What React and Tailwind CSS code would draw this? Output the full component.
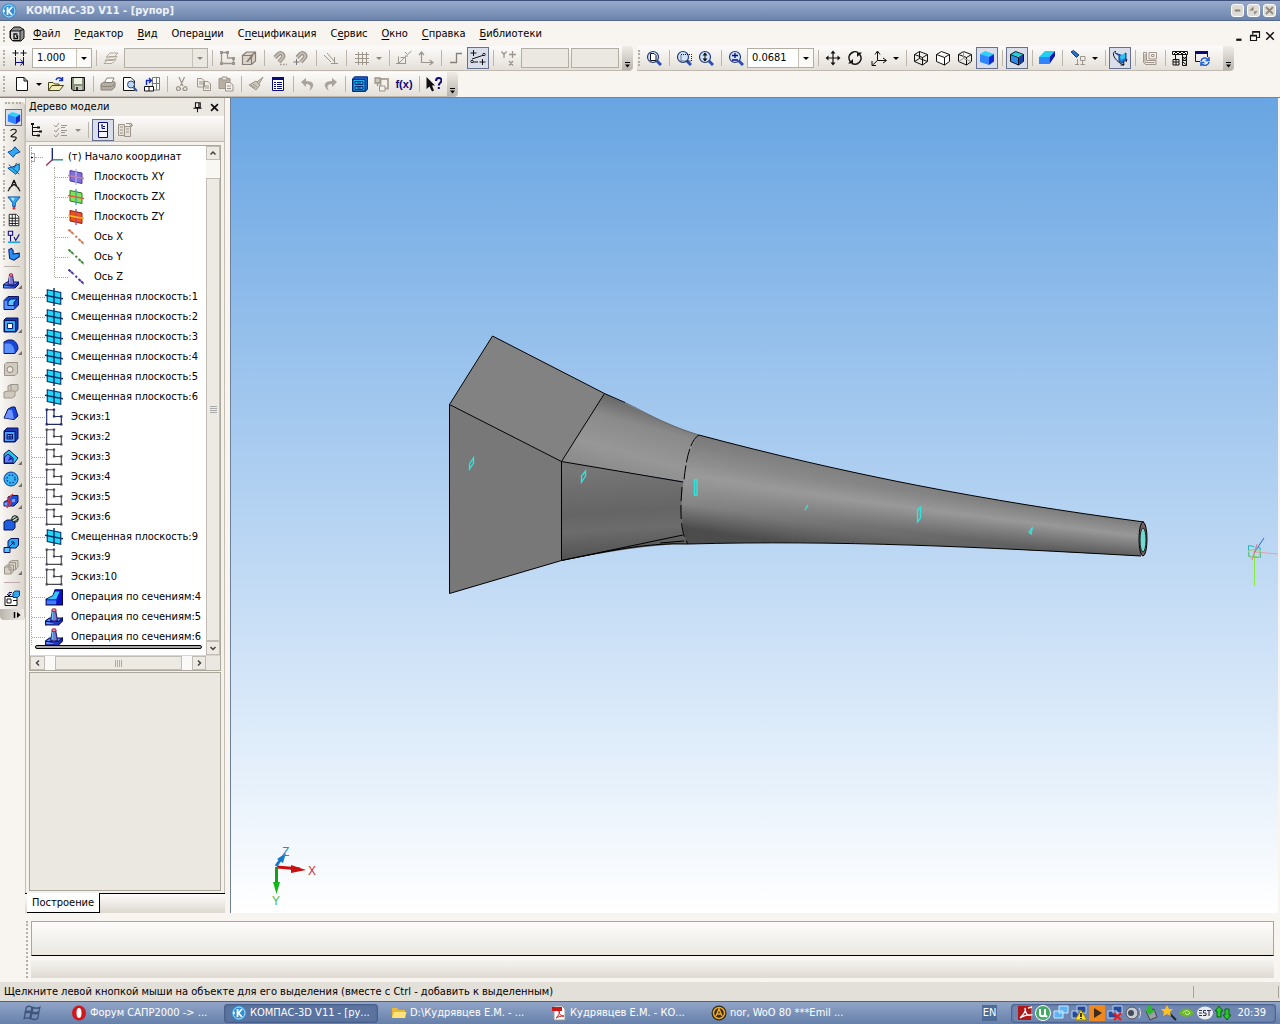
import React from "react";

const G = "#9c958b";
const N = "#0a0a78";
const K = "#111";

function Icon({ children, size = "size-4" }) {
  return (
    <svg viewBox="0 0 16 16" className={`${size} block shrink-0`} fill="none" strokeWidth="1" aria-hidden="true">
      {children}
    </svg>
  );
}

const cubeEdges = "M1.5 4.5L6.5 1.5L14.5 4.5V11.5L9.5 15L1.5 11.5ZM1.5 4.5L9.5 7.5L14.5 4.5M9.5 7.5V15";

function Lens({ children }) {
  return (
    <>
      <path d="M10.5 10.5L15 15" stroke="#2850b8" strokeWidth="3" />
      <circle cx="7" cy="7" r="5.5" fill="#cfe4fb" stroke="#24387a" strokeWidth="1.2" />
      {children}
    </>
  );
}

const magnet = (
  <>
    <path d="M4 7.500L7.500 4C10 1.500 14 5 11.500 8L8 12" stroke="#8f887e" strokeWidth="4" />
    <path d="M4 7.500L7.500 4C10 1.500 14 5 11.500 8L8 12" stroke="#c4bdb3" strokeWidth="2" />
  </>
);

const cone = (
  <>
    <path d="M0.500 11.500L4 9H15.500L12 12.500V15H0.500Z" fill="#5a94ff" stroke="#101068" />
    <path d="M0.500 12H12L15.500 9V11.500L12 15" fill="#2038c0" stroke="#101068" />
    <path d="M5 11L6.500 2.500H9.500L11 11C9 12 7 12 5 11Z" fill="#7f7ad0" stroke="#202070" />
    <path d="M6.500 3V10" stroke="#60c8f8" />
    <ellipse cx="8" cy="2" rx="1.800" ry="1.300" fill="#e8a0a8" stroke="#a02040" />
  </>
);

function plane(fill, edge, cross, post) {
  return (
    <>
      <path d="M2 1.500L14 4V14.500L2 12Z" fill={fill} stroke={edge} />
      <path d="M8 0V16" stroke={post} strokeWidth="1.300" />
      <path d="M0 6.500L16 9.500" stroke={cross} strokeWidth="1.300" />
    </>
  );
}

function axis(color) {
  return <path d="M0.500 0.500L6 5.500M7.500 7L9 8.500M10.500 10L16 15" stroke={color} strokeWidth="2" strokeDasharray="3 0.500" />;
}

function contour(color) {
  return (
    <>
      <path d="M1.500 1.500H8V7.500H14.500V14.500H1.500Z" stroke={color} />
      <path d="M0.500 0.500h2v2h-2zM7 0.500h2v2h-2zM7 6.500h2v2h-2zM13.500 6.500h2v2h-2zM0.500 13.500h2v2h-2zM13.500 13.500h2v2h-2z" fill={color} />
    </>
  );
}

const icons = {
  step: (
    <>
      <path d="M4.500 0V6M1.500 3H7.500M12.500 0V6M9.500 3H15.500" stroke={K} />
      <path d="M4.500 7V15.500M12.500 7V15.500M5 12.500H12M9.500 9.500L12 12.500L9.500 15.500" stroke={N} />
    </>
  ),
  layers: <path d="M1 13.500L5 9.500H13L9 13.500ZM2 10.500L6 6.500H14L10 10.500ZM3 7L7 3H15L11 7Z" stroke="#b0a99d" fill="#f2efe9" />,
  sketch: (
    <>
      <path d="M2.500 2.500H8.500V8H14.500V13.500H2.500Z" stroke={G} strokeWidth="1.300" />
      <path d="M1 1h3v3h-3zM7 1h3v3h-3zM1 12h3v3h-3zM13 7h3v3h-3zM13 12h3v3h-3z" fill={G} />
    </>
  ),
  box: (
    <>
      <path d="M1.500 5.500L5.500 2H14.500V11L10.500 14.500H1.500ZM1.500 5.500H10.500V14.500M10.500 5.500L14.500 2" stroke="#857d74" fill="#ddd5cc" strokeWidth="1.200" />
      <path d="M5 12L11 4L12.500 5.500L7 12Z" fill="#857d74" />
    </>
  ),
  magnetDots: (
    <>
      {magnet}
      <path d="M9 14.500h1.500M12 14.500h1.500M15 14.500h1" stroke={G} strokeWidth="1.500" />
    </>
  ),
  magnetPoint: (
    <>
      {magnet}
      <path d="M3.500 9V15M0.500 12H6.500" stroke="#777" />
    </>
  ),
  ortho: <path d="M1 5L8 12M4 3L12 12M8 13.500H15M11.500 7V13" stroke={G} />,
  grid: <path d="M1 4.500H15M1 8.500H15M1 12.500H15M4.500 2V15M8.500 2V15M12.500 2V15" stroke={G} />,
  lcs: <path d="M2.500 6.500V13.500H10M0 13.500H3M4.500 7.500H9.500V14M2 14L10 6M9 2L11.500 4.500L15.500 1M9 6H12" stroke={G} />,
  axes2: <path d="M3.500 3V12.500H14M1 5L3.500 2L6 5M11.500 10L15 12.500L11.500 15" stroke={G} strokeWidth="1.200" />,
  corner: <path d="M2 12.500H8.500V3.500H14" stroke="#888179" strokeWidth="1.300" />,
  snaps: (
    <>
      <path d="M3.500 0V6M0.500 3H6.500M12.500 9V15M9.500 12H15.500M2 9L14 5M3 12L8 12" stroke={K} />
      <circle cx="2" cy="11.500" r="1.200" fill="#fff" stroke={K} />
      <circle cx="14" cy="4.500" r="1.200" fill="#fff" stroke={K} />
    </>
  ),
  yx: <path d="M1.500 1.500L4 4.500L6.500 1.500M4 4.500V8M9 11L13 15.500M13 11L9 15.500M12.500 1V8M9 4.500H16" stroke={G} strokeWidth="1.300" />,
  zoomPage: <Lens><path d="M4.500 3.500H8L10 5.500V10.500H4.500Z" fill="#fff" stroke={K} /></Lens>,
  zoomArea: <Lens><path d="M5 4.500H15.500V11H5Z" stroke={K} strokeDasharray="1 1" /></Lens>,
  zoomUpDown: <Lens><path d="M7 3V11" stroke={K} /><path d="M4.500 5.500L7 2.500L9.500 5.500ZM4.500 8.500L7 11.500L9.500 8.500Z" fill={K} /></Lens>,
  zoomPlus: <Lens><path d="M7 3V8M4 5.500H10M4 10H10" stroke={N} strokeWidth="1.300" /></Lens>,
  move: (
    <>
      <path d="M8 2V14M2 8H14" stroke={K} strokeWidth="1.200" />
      <path d="M5.500 3.500L8 0.500L10.500 3.500ZM5.500 12.500L8 15.500L10.500 12.500ZM3.500 5.500L0.500 8L3.500 10.500ZM12.500 5.500L15.500 8L12.500 10.500Z" fill={K} />
    </>
  ),
  rotate: (
    <>
      <path d="M6.500 2C2 3.500 0.500 8 3.500 12M9.500 14C14 12.500 15.500 8 12.500 4M5 2.500C7 1.500 9.500 1.500 11 2.500M5 13.500C7 14.500 9 14.500 11 13.500" stroke={K} strokeWidth="1.400" />
      <path d="M1 13.500H6V9ZM15 2.500H10V7Z" fill={K} />
    </>
  ),
  axes3: (
    <>
      <path d="M6.500 2V10.500H15M6.500 10.500L1.500 15" stroke={K} />
      <path d="M4 4.500L6.500 1L9 4.500M12 8L15.500 10.500L12 13M1 11V15.500H5" stroke={K} />
    </>
  ),
  wire: <path d={cubeEdges + "M1.500 11.500L6.500 8.500L14.500 11.500M6.500 1.500V8.500"} stroke={K} />,
  wireHidden: <path d={cubeEdges} stroke={K} fill="#fff" />,
  wireThin: (
    <>
      <path d={cubeEdges} stroke={K} />
      <path d="M1.500 11.500L6.500 8.500L14.500 11.500M6.500 1.500V8.500" stroke="#999" />
    </>
  ),
  shaded: (
    <>
      <path d="M1 4L6 1L15 4L10 7.500Z" fill="#30d0f8" />
      <path d="M1 4L10 7V15L1 12Z" fill="#2f86ff" />
      <path d="M10 7L15 4V11.500L10 15Z" fill="#1428d8" />
    </>
  ),
  shadedEdges: (
    <>
      <path d={cubeEdges} fill="#2a8cf0" stroke={K} />
      <path d="M2.500 4.500L6.500 2.200L13.500 4.500L9.500 6.800Z" fill="#20d0d8" />
      <path d="M10 8L14 5.500V11L10 14Z" fill="#123fb0" />
    </>
  ),
  perspective: (
    <>
      <path d="M0 7L6 1H16L10.500 7Z" fill="#20d0f0" />
      <path d="M0 7H10.500V14H0Z" fill="#2f86ff" />
      <path d="M10.500 7L16 1V6L10.500 14Z" fill="#1018a8" />
    </>
  ),
  lamp: (
    <>
      <path d="M1 2L3.500 0.500L9 5L6.500 7.500Z" fill="#2870c8" stroke="#123f78" />
      <path d="M10.500 6.500H15V10.500H10.500ZM7.500 9V14M5 14.500H9M12.500 10.500V14.500M10.500 14.500H15" stroke={G} />
    </>
  ),
  spin: (
    <>
      <path d="M3 3L7 5.500V11L10 13L14 10V3L10 5.500Z" fill="#1b78d8" stroke="#0c3f90" />
      <path d="M8 6L13 3V8L9 10Z" fill="#33c5f2" />
      <path d="M4 1.500C-2 1.500 3 12 12 15M14 12L15 9M12 15H8.500M12 15L11.500 11.500" stroke={K} />
    </>
  ),
  snail: (
    <>
      <path d="M1.500 2.500H4.500V10.500H14V14.500H3.500L1.500 12.500ZM7 2.500H14.500V9H7ZM9.500 4.500H12V6.500H9.500ZM3 4V12.500H12.500" stroke="#a0968c" />
    </>
  ),
  crane: (
    <>
      <path d="M0.500 1.500H15.500V4.500H0.500ZM2 4L4 2L6 4L8 2L10 4L12 2L14 4M10.500 5V15.500H14.500V5M11 7L14 9.500M14 7L11 9.500M11 12L14 14.500M11 10.500H14M3.500 5V9" stroke={K} />
      <path d="M1 9.500H7V15H1ZM1 12H7M4 9.500V15" stroke={K} />
    </>
  ),
  refresh: (
    <>
      <path d="M1.500 2.500H13.500V7M1.500 2.500V11.500H6" stroke={N} />
      <path d="M1 1H14V4H1Z" fill={N} />
      <path d="M7 11A4 4 0 0 1 14 9.500M15 7V10.500H11.500M15 12A4 4 0 0 1 8 14M7 16V12.500H10.500" stroke="#2060d0" strokeWidth="1.600" />
    </>
  ),
  newDoc: <path d="M2.500 1.500H10L13.500 5V14.500H2.500ZM10 1.500V5H13.500" fill="#fff" stroke={K} />,
  open: (
    <>
      <path d="M0.500 14.500V6.500H5L6.500 8H11V9.500M0.500 14.500L4 9.500H15.500L11.500 14.500Z" fill="#f3eeb8" stroke="#444420" />
      <path d="M8 4C9 1 13 1 14 4M14.500 1V4.500H11" stroke="#1830c0" strokeWidth="1.400" />
    </>
  ),
  save: (
    <>
      <path d="M1.500 1.500H14.500V14.500H3L1.500 13Z" fill="#8a9078" stroke={K} />
      <path d="M4 2H12V8H4Z" fill="#eef0e4" />
      <path d="M5 10H12V14H5Z" fill="#c8ccc0" />
      <path d="M6 11H8V14H6Z" fill="#333" />
    </>
  ),
  print: (
    <>
      <path d="M1 8L4 6H15V11L12 14H1Z" fill="#b5aea4" stroke="#8a837a" />
      <path d="M4.500 6.500L7 2H14L12 6.500Z" fill="#fff" stroke="#8a837a" />
      <path d="M1 10.500H11.500L15 8" stroke="#8a837a" />
    </>
  ),
  preview: (
    <>
      <path d="M1.500 1.500H9L12.500 5V14.500H1.500Z" fill="#fff" stroke={K} />
      <circle cx="9" cy="8.500" r="3.500" fill="#bcd8f4" stroke="#26457e" />
      <path d="M11.500 11.500L15 15" stroke="#2a5ca8" strokeWidth="2" />
    </>
  ),
  convert: (
    <>
      <path d="M8.500 1.500H15.500V14H8.500ZM12.500 2V14M9 7.500H15" stroke="#777" fill="#fff" />
      <path d="M0.500 10.500H9.500V15H0.500ZM5 10.500V15" stroke={K} fill="#fff" />
      <path d="M2.500 9V4.500H7M5 2L7.500 4.500L5 7" stroke="#1028c0" strokeWidth="1.400" />
    </>
  ),
  cut: <path d="M5 1L9 10M10.500 1L6.500 10M4.500 10.500A2 2 0 1 0 6.500 12.500ZM11 10.500A2 2 0 1 1 9 12.500Z" stroke={G} strokeWidth="1.200" />,
  copy: <path d="M1.500 2.500H6L8.500 5V11H1.500ZM7.500 5.500H12L14.500 8V14.500H7.500ZM3 6H7M3 8H7M9 10H13M9 12H13" stroke={G} fill="#f1ede6" />,
  paste: (
    <>
      <path d="M1 2.500H12V12.500H1Z" fill="#b8b0a4" stroke={G} />
      <path d="M4 1H9V4H4Z" fill="#e8e4dc" stroke={G} />
      <path d="M7.500 6.500H12L15 9V15H7.500ZM9 10H13M9 12.500H13" fill="#f2eee8" stroke={G} />
    </>
  ),
  brush: <path d="M15 1L9 6L11 8ZM8 5L12 9L8 14L1 9ZM3 9L7 12M5 8L9 11" fill="#ccc5ba" stroke={G} />,
  props: (
    <>
      <path d="M2.500 1.500H13.500V14.500H2.500Z" fill="#fff" stroke={N} />
      <path d="M2 1H14V4H2Z" fill={N} />
      <path d="M4 6.500H6M7 6.500H12M4 8.500H6M7 8.500H12M4 10.500H6M7 10.500H12M4 12.500H6M7 12.500H12" stroke={N} />
    </>
  ),
  undo: <path d="M1 6L6 2V5C14 5 16 10 9 15C12 10 10 8 6 8V11Z" fill="#aaa39a" />,
  redo: <path d="M15 6L10 2V5C2 5 0 10 7 15C4 10 6 8 10 8V11Z" fill="#aaa39a" />,
  manager: (
    <>
      <path d="M0.500 3L2.500 0.800H15.500V13L13.500 15.500H0.500Z" fill="#1060c8" stroke="#082878" />
      <path d="M1 3.500H13V15H1Z" fill="#19b8f0" stroke="#082878" />
      <path d="M3 5.500H11V8.500H3ZM3 10.500H11V13.500H3ZM5 7H9M5 12H9" stroke="#082878" />
    </>
  ),
  variables: (
    <>
      <path d="M6.500 3H14V12.500H6.500Z" stroke="#b0a89c" fill="#f4f0ea" strokeWidth="2" />
      <path d="M5.500 10H11V15H5.500Z" stroke={G} fill="#f4f0ea" />
      <path d="M1 2H6V7H1ZM3.500 7V10" stroke={G} fill="#d0c9be" strokeWidth="1.300" />
    </>
  ),
  help: (
    <>
      <path d="M0.500 1V13L3.500 10.500L6 15.500L8 14.500L6 9.500H9Z" fill={K} />
      <path d="M10 5C10 1 15.500 1 15.500 4.500C15.500 7 12.800 6.500 12.800 9.500M12.800 11V13" stroke={N} strokeWidth="2" />
    </>
  ),
  curve: <path d="M4 3C8 0 12 2 10 5L5 9C4 10 5 10.500 8 10C12 10 11 13 7 15" stroke={K} strokeWidth="1.300" />,
  planeBlue: <path d="M1 8L6 6L9 2L15 8L10 10L7 14Z" fill="#2fa8f0" stroke="#0a3a90" />,
  planeCross: (
    <>
      <path d="M1 7L8 5L14 2V9L10 14Z" fill="#2fb8f4" stroke="#0a3a90" />
      <path d="M2 3L14 14M11 1L8 7" stroke="#0a3a90" />
    </>
  ),
  compass: <path d="M8 1L5 8L1 14M8 1L11 8L15 14M2 11L8 6L14 11M6 4H10" stroke={K} strokeWidth="1.300" />,
  filter: (
    <>
      <path d="M1 1H15L9.500 8V12H6.500V8Z" fill="#2fa8f0" stroke="#0a50a0" />
      <path d="M4 2H9L7 6Z" fill="#a8e4ff" />
      <circle cx="8" cy="14" r="1.600" fill="#e83030" />
    </>
  ),
  sheet: <path d="M2.500 1.500H10.500L13.500 4.500V14.500H2.500ZM2.500 6H13M2.500 9H13M2.500 12H13M6 1.500V14M9.500 1.500V14" fill="#fff" stroke={K} />,
  measure: (
    <>
      <path d="M1.500 1.500H6.500V6H1.500ZM4 6V13M8 8L10 12L14 5" stroke={N} strokeWidth="1.200" />
      <path d="M1 14H15" stroke="#26a8e0" strokeWidth="2" />
    </>
  ),
  elbow: <path d="M2 3L5 1.500L7 4V8L14 7V11L8 15L3 13Z" fill="#2a90f0" stroke="#0a1c80" strokeWidth="1.200" />,
  extrude: cone,
  cutBox: (
    <>
      <path d="M1 5.500L5 1.500H15.500V10L11 14.500H1Z" fill="#1848d0" stroke="#0a1260" />
      <path d="M1.500 6H4.500V10.500H11V14H1.500Z" fill="#5a94ff" />
      <path d="M5 6.500L8 4H14L11 7.500V10.500H5Z" fill="#60c4ff" stroke="#0a1260" />
    </>
  ),
  frame: (
    <>
      <path d="M1 3L3 1H15V12L13 15H1Z" fill="#1038b0" stroke="#0a1260" />
      <path d="M1.500 3.500H12.500V14.500H1.500Z" fill="#28b0f8" stroke="#0a1260" />
      <path d="M4.500 6.500H9.500V11.500H4.500Z" fill="#fff" stroke="#0a1260" />
    </>
  ),
  round: (
    <>
      <path d="M1 3L5 1H9C13 2 15 6 15 10L12 14.500H1Z" fill="#1848d8" stroke="#0a1260" />
      <path d="M1.500 4.500H6C9 5 11.500 8 11.500 14H1.500Z" fill="#5a90ff" />
    </>
  ),
  holeOff: (
    <>
      <path d="M1.500 3.500L4 1.500H14.500V12L12 14.500H1.500Z" fill="#d0cabf" stroke={G} />
      <circle cx="7" cy="8.500" r="3" fill="#eee9e0" stroke="#8a837a" />
    </>
  ),
  ribOff: <path d="M1 13V9L5 8V3L8 1.500H15V7L12 9V13L9 15H1ZM5 8H12M8 1.500V7" fill="#cfc8bd" stroke={G} />,
  taper: (
    <>
      <path d="M1 13L5 4L9 2H12L15 11L11 14.500Z" fill="#1848d8" stroke="#0a1260" />
      <path d="M1.500 13L5.500 4.500L9 5L11 14Z" fill="#6c94ff" />
    </>
  ),
  shell: (
    <>
      <path d="M1 4L4 1H15V11.500L12 15H1Z" fill="#1838b8" stroke="#0a1260" />
      <path d="M1.500 4.500H12V14.500H1.500Z" fill="#48a0ff" stroke="#0a1260" />
      <path d="M4 7.500H9.500V12H4ZM4 10H9.500M7 7.500V12" stroke="#0a1260" />
    </>
  ),
  wedge: (
    <>
      <path d="M1 5L6 1L15 9L11 14.500H1Z" fill="#28c8e8" stroke="#0a1260" />
      <path d="M1.500 8L5 5L10 9V14H1.500Z" fill="#5a80ff" stroke="#0a1260" />
      <path d="M5 12L7 7L10 10Z" fill="#1a2cb0" />
    </>
  ),
  array: (
    <>
      <circle cx="8" cy="8" r="7" fill="#35b5f4" stroke="#0a3a90" />
      <circle cx="8" cy="8" r="4" stroke="#0a3a90" strokeWidth="1.500" strokeDasharray="1.500 1.700" />
    </>
  ),
  section: (
    <>
      <path d="M1 9L5 7V4L9 2.500H15V9L11 13H1Z" fill="#1c50d8" stroke="#0a1260" />
      <path d="M1.500 9.500H5V12.500H1.500ZM9 6H12V9H9Z" fill="#7aa4ff" />
      <path d="M4 15L6 5L10 1M6 14L9 6" stroke="#e03030" strokeWidth="1.400" />
    </>
  ),
  boolean: (
    <>
      <path d="M1 7L4 5H12V13L10 15H1Z" fill="#1c60e0" stroke="#0a1260" />
      <circle cx="12" cy="4" r="3.300" fill="#b8d8c8" stroke={K} />
      <path d="M9 5L14 2M11 7L15 4" stroke={K} />
    </>
  ),
  scale: (
    <>
      <path d="M5 4L8 1.500H15.500V8L13 11H5Z" fill="#25a8f0" stroke="#0a1260" />
      <path d="M1 10.500H7V15.500H1Z" fill="#5ac0ff" stroke="#0a1260" />
      <path d="M6 10L11 5M8 5H11V8" stroke="#0a1260" />
    </>
  ),
  cubesOff: <path d="M1.500 8L4 6H10.500V12L8 15H1.500ZM6 3.500L8.500 1.500H15V8L12.500 11H6ZM6 3.500H12.500V11M1.500 8H8V15" fill="#d6cfc4" stroke={G} />,
  group: (
    <>
      <path d="M1 6.500H13V15.500H1ZM3 9H7V13H3ZM9 10.500H13" fill="#fff" stroke={K} />
      <path d="M9 3L11 1H15.500V5.500L13.500 7.500H9Z" fill="#2fa8f0" stroke="#0a3a90" />
      <path d="M5 5V2.500H8M3 4L5 6L7 4" stroke={N} />
    </>
  ),
  tree: (
    <>
      <path d="M3.500 1V13.500H8M3.500 5.500H8M3.500 9.500H10" stroke={K} />
      <path d="M2 1h3v2h-3zM8 4.500h3v2h-3zM10 8.500h3v2h-3zM8 12.500h3v2h-3z" fill={K} />
    </>
  ),
  listOff: <path d="M1 3L3 5L6 1M1 8L3 10L6 6M1 13L3 15L6 11M8 3.500H14M8 5.500H12M8 8.500H14M8 10.500H12M8 13.500H14" stroke={G} />,
  panel: <path d="M3.500 0.500H12.500V15.500H3.500ZM3.500 9.500H12.500M6 3H8M7 3V6.500H10M8 4.500H10" stroke={N} fill="#f4f5ff" />,
  pagesOff: <path d="M1.500 2.500H7.500V13.500H1.500ZM7.500 4.500H13.500V14.500H7.500ZM3 5H6M3 8H6M3 11H6M9 7H12M9 10H12M9 1.500H14.500V4M12.500 2.500L14.500 4.500L16 2.500" stroke={G} fill="#e6e1d8" />,
  origin: (
    <>
      <path d="M6.500 0V11" stroke="#1a2478" strokeWidth="1.200" />
      <path d="M6.500 10.500H16" stroke="#1f8a78" strokeWidth="1.200" />
      <path d="M6.500 10.500L1 15.500" stroke="#a02860" strokeWidth="1.200" />
    </>
  ),
  planeXY: plane("#8070d8", "#5038a0", "#c080b0", "#b0b8f0"),
  planeZX: plane("#80e060", "#2c7a20", "#e06030", "#40a0b0"),
  planeZY: plane("#f05020", "#902010", "#f8c020", "#a05080"),
  axisX: axis("#c87850"),
  axisY: axis("#3f8a35"),
  axisZ: axis("#4a3098"),
  offset: plane("#20d8f8", "#083068", "#083068", "#083068"),
  contourFirst: contour("#202a68"),
  contour: contour("#4a4a50"),
  loft: (
    <>
      <path d="M1 10L7 7L9 1.500H15.500V15H1Z" fill="#1010c8" stroke="#080850" />
      <path d="M1.500 10H10L13 3H9L7 7Z" fill="#30c8f8" />
      <path d="M1.500 11H10V14.500H1.500Z" fill="#3a80ff" />
    </>
  ),
};

function Tool({ icon, label, on, children }) {
  return (
    <button
      type="button"
      aria-label={label || icon}
      className={`flex h-[22px] w-[22px] shrink-0 items-center justify-center ${on ? "border border-[#66718e] bg-[#d9deea]" : ""}`}
    >
      {children || <Icon>{icons[icon]}</Icon>}
    </button>
  );
}

function Sep() {
  return (
    <span className="flex w-2 shrink-0 justify-center">
      <span className="h-4 w-px bg-[#bbb5aa]" />
    </span>
  );
}

function Down({ dim }) {
  return (
    <svg viewBox="0 0 12 12" className="size-3 shrink-0" aria-hidden="true">
      <path d="M3 5H9L6 8Z" fill={dim ? "#8f887e" : "#000"} />
    </svg>
  );
}

function Grip() {
  return <span className="h-4 w-[3px] shrink-0 border-l-2 border-dotted border-[#b4afa5]" />;
}

function Combo({ label, value, width, disabled }) {
  return (
    <span className={`flex h-5 shrink-0 items-center border border-[#b3aea4] ${width} ${disabled ? "bg-[#ebe8e1]" : "bg-white"}`}>
      <select aria-label={label} disabled={disabled} className="h-full min-w-0 flex-1 appearance-none bg-transparent pl-1 text-black outline-none">
        <option>{value}</option>
      </select>
      <span className={`flex h-full w-[15px] items-center justify-center border-l border-[#c6c1b7] ${disabled ? "bg-[#ebe8e1]" : "bg-[#fbfaf7]"}`}>
        <Down dim={disabled} />
      </span>
    </span>
  );
}

function Overflow() {
  return (
    <button type="button" aria-label="Параметры панели" className="flex h-full w-[11px] shrink-0 items-end justify-center rounded-r bg-linear-to-b from-[#efece6] to-[#b9b5ad] pb-[2px]">
      <svg viewBox="0 0 7 7" className="size-[7px]">
        <path d="M1 1.500H6" stroke="#000" />
        <path d="M1 3.500H6L3.500 6.500Z" fill="#000" />
      </svg>
    </button>
  );
}

const bar = "flex items-center border-b border-[#c0b9b0] bg-linear-to-b from-[#fdfcfb] to-[#e4dfd8] rounded-r";

const menu = [
  ["", "Ф", "айл"],
  ["", "Р", "едактор"],
  ["", "В", "ид"],
  ["Опера", "ц", "ии"],
  ["С", "п", "ецификация"],
  ["С", "е", "рвис"],
  ["", "О", "кно"],
  ["", "С", "правка"],
  ["", "Б", "иблиотеки"],
];

function Logo() {
  return (
    <Icon>
      <circle cx="8" cy="8" r="7.500" fill="#2f8fd4" />
      <circle cx="8" cy="8" r="6" stroke="#b8e0f8" />
      <path d="M6.500 4V12M11 4L7.500 8L11 12" stroke="#fff" strokeWidth="1.800" />
      <path d="M2 8H4M3 6.500V9.500" stroke="#fff" />
    </Icon>
  );
}

function TitleBar() {
  const btn = "flex size-[13px] items-center justify-center rounded-[3px] border border-white bg-[#dedbd5]";
  return (
    <header className="flex h-[21px] items-center border-t border-b border-t-[#3d4f79] border-b-[#56698f] bg-linear-to-b from-[#98aacb] to-[#6c84ac] px-px">
      <Logo />
      <h1 className="flex-1 pl-[9px] font-bold text-[#edf2f9]">КОМПАС-3D V11 - [рупор]</h1>
      <div className="flex gap-[3px] pr-[3px]">
        <button type="button" aria-label="Свернуть" className={btn}>
          <Icon size="size-[11px]"><path d="M4 8H12" stroke="#8a8378" strokeWidth="3" /></Icon>
        </button>
        <button type="button" aria-label="Развернуть" className={btn}>
          <Icon size="size-[11px]"><path d="M8 2V8H2ZM9 14V9H14Z" fill="#8a8378" /></Icon>
        </button>
        <button type="button" aria-label="Закрыть" className={btn}>
          <Icon size="size-[11px]"><path d="M3 3L13 13M13 3L3 13" stroke="#8a8378" strokeWidth="2.500" /></Icon>
        </button>
      </div>
    </header>
  );
}

function MenuBar() {
  return (
    <nav className="flex h-[25px] items-center pl-[3px]">
      <Grip />
      <span className="pl-[3px]">
        <Icon>
          <path d="M1 5L5 1H11L15 4V12L12 15H4L1 12Z" fill="#8f8f8f" stroke={K} />
          <path d="M1.500 5H11V14.500H3L1.500 12ZM11 5L15 3" fill="#d6d6d6" stroke={K} />
          <path d="M8.500 8H5V12.500H8.500V10H7" stroke={K} strokeWidth="1.300" />
        </Icon>
      </span>
      <div className="flex flex-1 pl-px">
        {menu.map(([before, key, after]) => (
          <button type="button" key={before + key + after} className="px-[7px]">
            {before}
            <u className="underline-offset-2">{key}</u>
            {after}
          </button>
        ))}
      </div>
      <div className="flex gap-[3px] pt-1 pr-1">
        <button type="button" aria-label="Свернуть документ"><Icon size="size-3"><path d="M3 13H10" stroke={K} strokeWidth="3" /></Icon></button>
        <button type="button" aria-label="Восстановить документ"><Icon size="size-3"><path d="M2 7H10V14H2ZM5 6V2H14V10H11M5 3H14M2 8H10" stroke={K} strokeWidth="1.500" /></Icon></button>
        <button type="button" aria-label="Закрыть документ"><Icon size="size-3"><path d="M3 3L13 13M13 3L3 13" stroke={K} strokeWidth="2" /></Icon></button>
      </div>
    </nav>
  );
}

function Toolbars() {
  return (
    <>
      <div className="flex h-[25px] gap-1">
        <div className={`${bar} pl-[3px]`}>
          <Grip />
          <span className="w-0.5" />
          <Tool icon="step" label="Текущий шаг" />
          <span className="w-0.5" />
          <Combo label="Шаг курсора" value="1.000" width="w-[60px]" />
          <Sep />
          <Tool icon="layers" label="Слои" />
          <span className="w-0.5" />
          <Combo label="Слой" value="" width="w-[84px]" disabled />
          <Sep />
          <Tool icon="sketch" label="Эскиз" />
          <Tool icon="box" label="Операция" />
          <Sep />
          <Tool icon="magnetDots" label="Привязки" />
          <Tool icon="magnetPoint" label="Запретить привязки" />
          <Sep />
          <Tool icon="ortho" label="Ортогональное черчение" />
          <Sep />
          <span className="w-px" />
          <Tool icon="grid" label="Сетка" />
          <Down dim />
          <Sep />
          <Tool icon="lcs" label="Локальная СК" />
          <Tool icon="axes2" label="Система координат" />
          <Sep />
          <Tool icon="corner" label="Округление" />
          <Tool icon="snaps" label="Параметрический режим" on />
          <Sep />
          <Tool icon="yx" label="Координаты" />
          <input aria-label="Координата X" disabled className="ml-[2px] h-5 w-12 border border-[#b3aea4] bg-[#ebe8e1]" />
          <input aria-label="Координата Y" disabled className="mr-[3px] ml-0.5 h-5 w-12 border border-[#b3aea4] bg-[#ebe8e1]" />
          <Overflow />
        </div>
        <div className={`${bar} pl-px`}>
          <Grip />
          <span className="w-0.5" />
          <Tool icon="zoomPage" label="Показать все" />
          <Sep />
          <Tool icon="zoomArea" label="Увеличить рамкой" />
          <Tool icon="zoomUpDown" label="Приблизить" />
          <Sep />
          <Tool icon="zoomPlus" label="Масштаб" />
          <Combo label="Текущий масштаб" value="0.0681" width="w-[67px]" />
          <Sep />
          <Tool icon="move" label="Сдвинуть" />
          <Tool icon="rotate" label="Повернуть" />
          <span className="w-0.5" />
          <Tool icon="axes3" label="Ориентация" />
          <Down />
          <Sep />
          <Tool icon="wire" label="Каркас" />
          <Tool icon="wireHidden" label="Без невидимых линий" />
          <Tool icon="wireThin" label="Невидимые линии тонкие" />
          <Tool icon="shaded" label="Полутоновое" on />
          <Sep />
          <Tool icon="shadedEdges" label="Полутоновое с каркасом" on />
          <Sep />
          <Tool icon="perspective" label="Перспектива" />
          <Sep />
          <span className="w-px" />
          <Tool icon="lamp" label="Освещение" />
          <Down />
          <Sep />
          <Tool icon="spin" label="Упрощенное отображение" on />
          <Sep />
          <Tool icon="snail" label="Отображение" />
          <Sep />
          <Tool icon="crane" label="Построение" />
          <Tool icon="refresh" label="Обновить" />
          <span className="w-[10px]" />
          <Overflow />
        </div>
      </div>
      <div className="flex h-[27px] border-b border-[#6d86a8] pt-px">
        <div className={`${bar} pl-[3px]`}>
          <Grip />
          <span className="w-[5px]" />
          <Tool icon="newDoc" label="Создать" />
          <Down />
          <Tool icon="open" label="Открыть" />
          <Tool icon="save" label="Сохранить" />
          <Sep />
          <Tool icon="print" label="Печать" />
          <Tool icon="preview" label="Просмотр" />
          <Tool icon="convert" label="Преобразовать" />
          <Sep />
          <Tool icon="cut" label="Вырезать" />
          <Tool icon="copy" label="Копировать" />
          <Tool icon="paste" label="Вставить" />
          <Sep />
          <Tool icon="brush" label="Копировать свойства" />
          <Tool icon="props" label="Свойства" />
          <Sep />
          <Tool icon="undo" label="Отменить" />
          <Tool icon="redo" label="Повторить" />
          <Sep />
          <Tool icon="manager" label="Менеджер библиотек" />
          <Tool icon="variables" label="Переменные" />
          <Tool label="Функции">
            <span className="font-['Liberation_Sans',sans-serif] font-bold text-[#0a0a78]">f(x)</span>
          </Tool>
          <Sep />
          <Tool icon="help" label="Справка" />
          <span className="w-0.5" />
          <Overflow />
        </div>
      </div>
    </>
  );
}

const sideModes = ["curve", "planeBlue", "planeCross", "compass", "filter", "sheet", "measure", "elbow"];
const sideTools = ["extrude", "cutBox", "frame", "round", "holeOff", "ribOff", "taper", "shell", "wedge", "array", "section", "boolean", "scale", "cubesOff"];
const withMenu = ["extrude", "frame", "round", "wedge", "array", "section", "cubesOff"];

function SideBar() {
  return (
    <aside className="w-[25px] shrink-0 pt-1">
      <div className="rounded-r border-r border-[#cdc7bd] bg-linear-to-r from-[#faf8f5] to-[#dcd7ce]">
        <div className="ml-[5px] h-[7px] w-4 border-t-2 border-dotted border-[#b4afa5]" />
        <button type="button" aria-label="Редактирование детали" className="ml-[5px] flex size-[17px] items-center justify-center border border-[#66718e] bg-[#d9deea]">
          <Icon size="size-[14px]">{icons.shaded}</Icon>
        </button>
        {sideModes.map((name) => (
          <div key={name} className="flex h-[17px] items-center gap-px pl-[3px]">
            <span className="h-3 w-[3px] border-l-2 border-dotted border-[#b4afa5]" />
            <button type="button" aria-label={name}><Icon size="size-[14px]">{icons[name]}</Icon></button>
          </div>
        ))}
        <div className="mx-1 mt-1 mb-[3px] h-px bg-[#b9b2a8]" />
        {sideTools.map((name) => (
          <button type="button" key={name} aria-label={name} className="flex h-[22px] w-full items-center pl-[3px]">
            <Icon>{icons[name]}</Icon>
            {withMenu.includes(name) && (
              <svg viewBox="0 0 4 4" className="mt-3 -ml-px size-1"><path d="M4 0V4H0Z" fill="#77716a" /></svg>
            )}
          </button>
        ))}
        <div className="mx-1 my-1 h-px bg-[#c0a8b0]" />
        <button type="button" aria-label="Группа" className="flex h-[22px] w-full items-center pl-1">
          <Icon>{icons.group}</Icon>
        </button>
        <button type="button" aria-label="Ещё" className="flex h-[11px] w-full items-center justify-end rounded-b bg-linear-to-r from-[#b9b5ad] to-[#f0ede7] pr-[3px]">
          <svg viewBox="0 0 8 8" className="size-2"><path d="M1.500 1V7" stroke="#000" strokeWidth="1.500" /><path d="M4 1V7L7.500 4Z" fill="#000" /></svg>
        </button>
      </div>
    </aside>
  );
}

const originChildren = [
  ["planeXY", "Плоскость XY"],
  ["planeZX", "Плоскость ZX"],
  ["planeZY", "Плоскость ZY"],
  ["axisX", "Ось X"],
  ["axisY", "Ось Y"],
  ["axisZ", "Ось Z"],
];

const items = [
  ["offset", "Смещенная плоскость:1"],
  ["offset", "Смещенная плоскость:2"],
  ["offset", "Смещенная плоскость:3"],
  ["offset", "Смещенная плоскость:4"],
  ["offset", "Смещенная плоскость:5"],
  ["offset", "Смещенная плоскость:6"],
  ["contourFirst", "Эскиз:1"],
  ["contour", "Эскиз:2"],
  ["contour", "Эскиз:3"],
  ["contour", "Эскиз:4"],
  ["contour", "Эскиз:5"],
  ["contour", "Эскиз:6"],
  ["offset", "Смещенная плоскость:9"],
  ["contour", "Эскиз:9"],
  ["contour", "Эскиз:10"],
  ["loft", "Операция по сечениям:4"],
  ["extrude", "Операция по сечениям:5"],
  ["extrude", "Операция по сечениям:6"],
];

const dots = "shrink-0 border-t border-dotted border-[#a9a49b]";
const thumb = "flex items-center justify-center border border-[#c2bdb4] bg-[#edeae4]";

function Chevron({ d }) {
  return (
    <svg viewBox="0 0 8 8" className="size-2" fill="none" aria-hidden="true">
      <path d={d} stroke="#444" strokeWidth="1.500" />
    </svg>
  );
}

function ModelTree() {
  return (
    <div className="flex h-[526px] shrink-0 flex-col border border-[#aca79d] bg-white">
      <div className="flex min-h-0 flex-1">
        <div className="min-w-0 flex-1">
          <ul className="ml-px h-[499px] overflow-hidden pt-px whitespace-nowrap">
            <li className="border-l border-dotted border-[#a9a49b]">
              <div className="flex h-5 items-center">
                <span className="-ml-px flex h-[9px] w-1 items-center border border-l-0 border-[#aaa]"><span className="h-px w-0.5 bg-black" /></span>
                <span className={`${dots} w-2`} />
                <span className="ml-[2px]"><Icon size="size-[18px]">{icons.origin}</Icon></span>
                <span className="ml-[5px]">(т) Начало координат</span>
              </div>
              <ul className="ml-[22px]">
                {originChildren.map(([icon, name], i) => (
                  <li key={name} className="flex h-5 items-center">
                    <span className={`self-start border-l border-dotted border-[#a9a49b] ${i === originChildren.length - 1 ? "h-[10px]" : "h-5"}`} />
                    <span className={`${dots} w-[13px]`} />
                    <Icon>{icons[icon]}</Icon>
                    <span className="ml-[10px]">{name}</span>
                  </li>
                ))}
              </ul>
            </li>
            {items.map(([icon, name]) => (
              <li key={name} className="flex h-5 items-center border-l border-dotted border-[#a9a49b]">
                <span className={`${dots} w-[13px]`} />
                <Icon size="size-[18px]">{icons[icon]}</Icon>
                <span className="ml-2">{name}</span>
              </li>
            ))}
          </ul>
          <div className="mr-1 ml-[5px] h-1 rounded-full border border-black bg-[#aaa]" />
        </div>
        <div className="flex w-[14px] shrink-0 flex-col bg-[#f8f7f4]">
          <div className={`${thumb} h-[14px]`}><Chevron d="M1.500 5.500L4 3L6.500 5.500" /></div>
          <div className="h-[18px]" />
          <div className={`${thumb} flex-1`}>
            <span className="flex w-[7px] flex-col gap-px"><i className="h-px bg-[#aaa]" /><i className="h-px bg-[#aaa]" /><i className="h-px bg-[#aaa]" /><i className="h-px bg-[#aaa]" /></span>
          </div>
          <div className={`${thumb} h-[14px]`}><Chevron d="M1.500 3L4 5.500L6.500 3" /></div>
        </div>
      </div>
      <div className="flex h-[15px] border-t border-[#d8d4cc] bg-[#ebe8e1] pr-[14px]">
        <div className={`${thumb} w-[15px]`}><Chevron d="M5 1.500L2.500 4L5 6.500" /></div>
        <div className="w-[10px] bg-[#faf9f7]" />
        <div className={`${thumb} flex-1`}>
          <span className="flex h-[7px] gap-px"><i className="w-px bg-[#aaa]" /><i className="w-px bg-[#aaa]" /><i className="w-px bg-[#aaa]" /><i className="w-px bg-[#aaa]" /></span>
        </div>
        <div className="w-[10px] bg-[#faf9f7]" />
        <div className={`${thumb} w-[14px]`}><Chevron d="M3 1.500L5.500 4L3 6.500" /></div>
      </div>
    </div>
  );
}

function TreePanel() {
  return (
    <section className="flex w-[200px] shrink-0 flex-col">
      <div className="flex min-h-0 flex-1 flex-col border-r border-l border-[#c4beb4] bg-[#f5f2ec]">
        <div className="flex h-[18px] items-center bg-[#ebe8e1] pl-[3px]">
          <h2 className="flex-1">Дерево модели</h2>
          <button type="button" aria-label="Закрепить" className="mr-[6px]"><Icon size="size-[11px]"><path d="M5 1H12V8H5ZM2 9H14M8 9V15M10 1V8" stroke={K} strokeWidth="1.500" /></Icon></button>
          <button type="button" aria-label="Закрыть панель" className="mr-1"><Icon size="size-[11px]"><path d="M3 3L13 13M13 3L3 13" stroke={K} strokeWidth="2.500" /></Icon></button>
        </div>
        <div className="flex h-[26px] items-center border-b border-[#c0b9b0] bg-linear-to-b from-[#fdfcfb] to-[#e4dfd8] pt-0.5">
          <Tool icon="tree" label="Структура" />
          <span className="w-0.5" />
          <Tool icon="listOff" label="Состав" />
          <Down dim />
          <Sep />
          <Tool icon="panel" label="Дополнительное окно" on />
          <Tool icon="pagesOff" label="Отношения" />
        </div>
        <div className="flex min-h-0 flex-1 flex-col px-[3px] pt-[3px]">
          <ModelTree />
          <div className="mt-px mb-[2px] flex-1 border border-[#aca79d] bg-[#ebe8e1]" />
        </div>
      </div>
      <div className="flex h-5 border-t border-black bg-linear-to-b from-[#fdfcfb] to-[#ddd8d0] pl-[2px]">
        <button type="button" className="-mt-px border-r border-b border-black bg-white px-[5px]">Построение</button>
      </div>
    </section>
  );
}

const pipeShape = "M699 435C845 474 985 501 1144 522L1141 556C980 547 840 540 688 544C676 525 682 455 699 435Z";

function Viewport() {
  return (
    <main className="ml-[5px] min-w-0 flex-1 border-l border-[#6f7f96] bg-linear-to-b from-[#68a5e2] to-white">
      <svg viewBox="231 98 1047 815" className="h-full w-full" fill="none" role="img" aria-label="рупор">
        <defs>
          <linearGradient id="pipe" gradientUnits="userSpaceOnUse" x1="800" y1="447" x2="786" y2="543">
            <stop offset="0" stopColor="#767676" />
            <stop offset="0.450" stopColor="#9b9b9b" />
            <stop offset="0.750" stopColor="#858585" />
            <stop offset="1" stopColor="#4c4c4c" />
          </linearGradient>
          <linearGradient id="pipeEnd" gradientUnits="userSpaceOnUse" x1="1090" y1="514" x2="1085" y2="554">
            <stop offset="0" stopColor="#7a7a7a" />
            <stop offset="0.400" stopColor="#989898" />
            <stop offset="1" stopColor="#505050" />
          </linearGradient>
          <linearGradient id="pipeMix" x1="0" x2="1">
            <stop offset="0" stopColor="#fff" stopOpacity="0" />
            <stop offset="1" stopColor="#fff" />
          </linearGradient>
          <mask id="fade">
            <rect x="685" y="420" width="462" height="150" fill="url(#pipeMix)" />
          </mask>
          <linearGradient id="upper" gradientUnits="userSpaceOnUse" x1="650" y1="410" x2="632" y2="476">
            <stop offset="0" stopColor="#6c6c6c" />
            <stop offset="0.250" stopColor="#8a8a8a" />
            <stop offset="0.700" stopColor="#979797" />
            <stop offset="1" stopColor="#8c8c8c" />
          </linearGradient>
          <linearGradient id="lower" gradientUnits="userSpaceOnUse" x1="620" y1="468" x2="625" y2="555">
            <stop offset="0" stopColor="#767676" />
            <stop offset="0.500" stopColor="#656565" />
            <stop offset="0.700" stopColor="#6c6c6c" />
            <stop offset="1" stopColor="#545454" />
          </linearGradient>
        </defs>
        <path d="M492.500 336L604.500 393.500L561.500 461.500L449.500 404.500Z" fill="#828282" />
        <path d="M449.500 404.500L561.500 461.500V560.500L449.500 593.500Z" fill="#787878" />
        <path d="M604.500 393.500C635 407 660 422 699 435L690 482L561.500 461.500Z" fill="url(#upper)" />
        <path d="M561.500 461.500L690 482V544C650 544 610 552 561.500 560.500Z" fill="url(#lower)" />
        <path d={pipeShape} fill="url(#pipe)" />
        <path d={pipeShape} fill="url(#pipeEnd)" mask="url(#fade)" />
        <path d="M604.500 393.500L561.500 461.500M449.500 404.500L561.500 461.500V560.500M561.500 461.500L683 482M449.500 404.500V593.500L561.500 560.500L683 535M449.500 404.500L492.500 336L604.500 393.500L625 402.500M561.500 560.500C600 553 645 542 688 544M660 543L684 541" stroke="#000" />
        <path d="M625 402.500C645 412 665 425 699 435" stroke="#666" />
        <path d="M699 435C845 474 985 501 1144 522M1141 556C980 547 840 540 688 544" stroke="#000" />
        <path d="M699 435C690 440 686 460 684 480" stroke="#000" strokeDasharray="14 3" />
        <path d="M682 487C680 510 680 532 688 544" stroke="#000" strokeDasharray="14 4" />
        <ellipse cx="1143" cy="539" rx="4" ry="17" fill="#765f60" stroke="#000" />
        <ellipse cx="1143" cy="540" rx="3" ry="12" fill="#70dcd0" stroke="#222" />
        <g stroke="#2ee6e0" strokeWidth="1.300">
          <path d="M469.500 464L473.500 458V463L469.500 469ZM581.500 476L585.500 471V476L581.500 482ZM694.500 480H697V495H694.500ZM805 510L808 505M917.500 510L920.500 507V518L917.500 522ZM1029 532L1032.500 527L1031 534Z" />
        </g>
        <path d="M1254.500 553V586" stroke="#86ec3c" />
        <path d="M1255 552L1278 554" stroke="#e8a0a8" />
        <path d="M1254 553L1264 538" stroke="#2864c8" />
        <path d="M1248.500 545.500L1260.500 548V558L1248.500 556Z" stroke="#22b8c0" strokeDasharray="6 2" />
        <path d="M1249 550H1260V557H1249Z" stroke="#90cc60" />
        <path d="M1252 560L1257 544" stroke="#e07898" />
        <path d="M277 867L300 869" stroke="#c81010" strokeWidth="3" />
        <path d="M291 865L306 870L291 873Z" fill="#c81010" />
        <path d="M276.500 867V886" stroke="#12a018" strokeWidth="3" />
        <path d="M273 882H280L276.500 894Z" fill="#12b818" />
        <path d="M276 866L281 859" stroke="#1678c8" strokeWidth="3" />
        <path d="M277 859L286 853L283 863Z" fill="#1678c8" />
        <g fontFamily="Liberation Sans, sans-serif" fontSize="12">
          <text x="308" y="875" fill="#c83040">X</text>
          <text x="272" y="905" fill="#48b850">Y</text>
          <text x="282" y="856" fill="#3088c8">Z</text>
        </g>
      </svg>
    </main>
  );
}

const tasks = [
  ["Форум САПР2000 -> ...", <g key="o"><ellipse cx="8" cy="8" rx="7" ry="7.500" fill="#d01820" /><ellipse cx="8" cy="8" rx="2.500" ry="5" fill="#fff" /></g>],
  ["КОМПАС-3D V11 - [ру...", null],
  ["D:\\Кудрявцев Е.М. - ...", <g key="f"><path d="M1 3H6L8 5H14V13H1Z" fill="#e8b83c" /><path d="M1 13L3 7H15.500L14 13Z" fill="#ffe27a" /></g>],
  ["Кудрявцев Е.М. - КО...", <g key="p"><path d="M3 1H11L14 4V15H3Z" fill="#fff" stroke="#999" /><path d="M1 2H11V6H1Z" fill="#c81818" /><path d="M5 13C8 10 9 8 8 6C8 10 11 11 13 11C9 11 7 12 5 13" stroke="#c81818" /></g>],
  ["nor, WoO 80 ***Emil ...", <g key="a"><circle cx="8" cy="8" r="7.500" fill="#302818" /><circle cx="8" cy="8" r="5.500" stroke="#f0a820" strokeWidth="1.500" /><path d="M5 11L8 4L11 11M6 9H10" stroke="#f0a820" strokeWidth="1.500" /></g>],
];

const monitors = <path d="M6 1H15V8H6ZM1 6H10V13H1Z" fill="#244a9c" stroke="#b8d4f4" />;

const tray = [
  ["Acrobat", <path key="a" d="M1 1H14V15H1Z" fill="#b01818" />, <path key="b" d="M3 13C7 9 9 5 8 3C8 9 11 11 14 10C9 9 6 11 3 13M11 3L15 2" stroke="#fff" strokeWidth="1.300" />],
  ["Torrent", <circle key="a" cx="8" cy="8" r="7.500" fill="#46a868" stroke="#fff" />, <path key="b" d="M5 4V9C5 12 10 12 10 9V4M10 10L12 12" stroke="#fff" strokeWidth="2" />],
  ["Сеть", <path key="a" d="M6 1H15V8H6ZM1 6H10V13H1Z" fill="#5cb4f4" stroke="#cfe8ff" />],
  ["Сеть ограничена", <g key="a">{monitors}</g>, <path key="b" d="M10 5L16 15H4Z" fill="#ffe020" stroke="#a08000" />, <path key="c" d="M10 8V12M10 13V14" stroke="#000" strokeWidth="1.500" />],
  ["Плеер", <path key="a" d="M0 0H16V16H0Z" fill="#f08820" />, <path key="b" d="M5 3L13 8L5 13Z" fill="#3c2c20" />],
  ["Сеть отключена", <g key="a">{monitors}</g>, <path key="b" d="M7 8L14 15M14 8L7 15" stroke="#e02020" strokeWidth="2" />],
  ["Громкость", <circle key="a" cx="7" cy="8" r="6" fill="#c8ccd4" stroke="#555" />, <circle key="b" cx="6" cy="8" r="3" fill="#444c5c" />, <path key="c" d="M14 3C16 6 16 10 14 13" stroke="#ddd" />],
  ["Устройство", <path key="a" d="M3 6L11 4L14 12L7 15Z" fill="#9aa0a8" stroke="#444" />, <path key="b" d="M4 1H9V5H12L7 10L2 5H4Z" fill="#30b830" />],
  ["Мастер", <path key="a" d="M7 7L15 15" stroke="#222" strokeWidth="2" />, <path key="b" d="M6 0L8 4L12 4L9 7L10 11L6 9L2 11L3 7L0 4L4 4Z" fill="#ffc020" />],
  ["NVIDIA", <path key="a" d="M0 8C4 2 11 2 15 8C11 13 4 13 0 8Z" fill="#6cb828" />, <path key="b" d="M4 8C6 5 9 5 11 8C9 10 7 10 6 8" stroke="#dff0c8" />],
  ["ESET", <ellipse key="a" cx="8" cy="8" rx="8" ry="6.500" fill="#e8ecec" />, <path key="b" d="M2 5.500H5M2 8H5M2 10.500H5M9 5.500H6.500V8H9V10.500H6M10 5.500H14M12 5.500V11" stroke="#335" />],
  ["Обмен", <path key="a" d="M4 1L8 6H6V12H2V6H0ZM12 15L8 10H10V4H14V10H16Z" fill="#28c828" stroke="#0a6010" />],
];

function TaskBar() {
  return (
    <footer className="flex h-[23px] items-center border-t border-[#4c618c] bg-linear-to-b from-[#92a5c8] to-[#6580aa] text-white">
      <button type="button" aria-label="Пуск" className="flex w-16 justify-center">
        <Icon size="size-[18px]"><path d="M3 3C5 1 6 2 8 3L7 7C5 6 4 6 2 7ZM9 3C11 4 13 4 15 3L14 7C12 8 10 8 8 7ZM2 8C4 7 5 7 7 8L6 13C4 12 3 12 1 13ZM8 8C10 9 12 9 14 8L13 13C11 14 9 14 7 13Z" stroke="#40557a" strokeWidth="1.200" /></Icon>
      </button>
      <div className="flex min-w-0 flex-1">
        {tasks.map(([name, icon]) => (
          <button
            type="button"
            key={name}
            className={`mr-[6px] flex h-[19px] w-[154px] items-center gap-[3px] rounded pl-[7px] whitespace-nowrap ${icon ? "" : "bg-[#5a739f] shadow-[inset_0_0_2px_1px_#465c88]"}`}
          >
            {icon ? <Icon>{icon}</Icon> : <Logo />}
            {name}
          </button>
        ))}
      </div>
      <span className="mr-[14px] bg-[#4f6b98] px-[1px]">EN</span>
      <div className="mr-1 flex h-[19px] items-center gap-[2px] rounded bg-[#6f87b0] pr-[10px] pl-[6px] shadow-[inset_0_0_2px_1px_#465c88]">
        {tray.map(([name, ...shapes]) => (
          <button type="button" key={name} aria-label={name}><Icon>{shapes}</Icon></button>
        ))}
        <time className="pl-1">20:39</time>
      </div>
    </footer>
  );
}

export default function App() {
  return (
    <div className="flex h-screen flex-col overflow-hidden bg-[#f8f5f0] font-['DejaVu_Sans_Condensed','DejaVu_Sans',sans-serif] text-[11px] leading-4 text-black">
      <TitleBar />
      <MenuBar />
      <Toolbars />
      <div className="flex min-h-0 flex-1 pr-0.5">
        <SideBar />
        <TreePanel />
        <Viewport />
      </div>
      <div className="flex h-[69px] gap-[3px] pt-2 pb-1 pr-[6px] pl-[26px]">
        <span className="w-0.5 border-l-2 border-dotted border-[#b4afa5]" />
        <div className="flex flex-1 flex-col">
          <div className="h-[35px] border border-b-black border-[#aca79d] bg-linear-to-b from-[#fdfcfb] to-[#ebe8e2]" />
          <div className="mt-px h-[21px] bg-linear-to-b from-[#faf9f7] to-[#dfdad2]" />
        </div>
      </div>
      <div className="flex h-[19px] items-center bg-[#e3dfd9] pl-1">
        <p className="flex-1">Щелкните левой кнопкой мыши на объекте для его выделения (вместе с Ctrl - добавить к выделенным)</p>
        <span className="mr-px h-3 w-[86px] border-x border-[#a9a49b]" />
      </div>
      <TaskBar />
    </div>
  );
}
